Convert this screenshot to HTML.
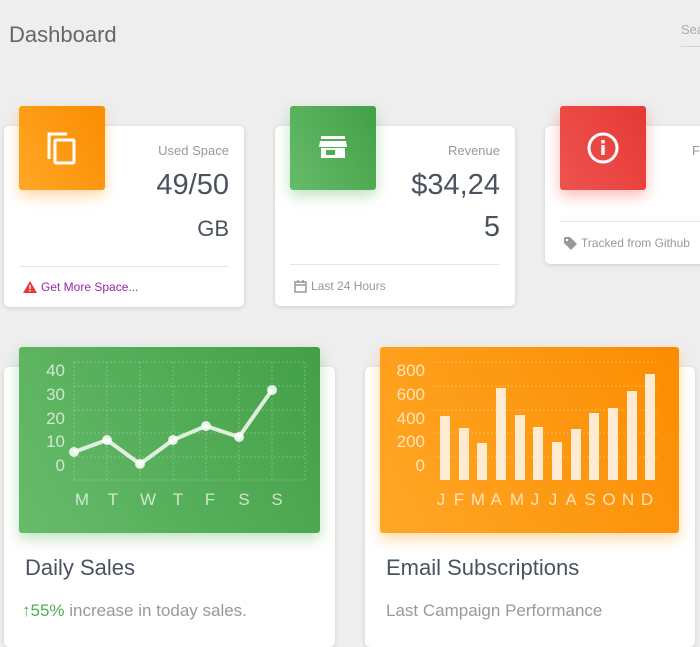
<!DOCTYPE html>
<html><head><meta charset="utf-8"><style>
*{margin:0;padding:0;box-sizing:border-box}
body{width:700px;height:630px;overflow:hidden;background:#eeeeee;font-family:"Liberation Sans",sans-serif;position:relative}
.a{position:absolute}
.card{position:absolute;background:#fff;border-radius:5px;box-shadow:0 1px 4px rgba(0,0,0,.14)}
.ib{position:absolute;width:86px;height:84px;border-radius:3px;display:flex;align-items:center;justify-content:center}
.or{background:linear-gradient(60deg,#ffa726,#fb8c00);box-shadow:0 6px 14px rgba(255,152,0,.35)}
.gr{background:linear-gradient(60deg,#66bb6a,#43a047);box-shadow:0 6px 14px rgba(76,175,80,.35)}
.rd{background:linear-gradient(60deg,#ef5350,#e53935);box-shadow:0 6px 14px rgba(244,67,54,.35)}
.cat{color:#999;font-size:13px;text-align:right}
.val{color:#4a5260;font-size:29px;text-align:right}
.div{position:absolute;height:1px;background:#e6e6e6}
.ft{font-size:12px;color:#999;display:flex;align-items:center;gap:4px}
</style></head><body>
<div class="a" style="left:9px;top:22px;font-size:22px;color:#666">Dashboard</div>
<div class="a" style="left:681px;top:22px;font-size:13px;color:#aaa">Search</div>
<div class="a" style="left:681px;top:46px;width:30px;height:1px;background:#d2d2d2"></div>

<div class="card" style="left:4px;top:126px;width:240px;height:181px"></div>
<div class="ib or" style="left:19px;top:106px"><svg width="32" height="34" viewBox="0 0 32 34" fill="none" stroke="#fff" stroke-width="3"><path d="M3 28V3h18"/><rect x="9" y="9" width="19" height="23" rx="1"/></svg></div>
<div class="a cat" style="left:100px;top:143px;width:129px">Used Space</div>
<div class="a val" style="left:100px;top:169px;width:129px">49/50</div>
<div class="a val" style="left:100px;top:216px;width:129px;font-size:22px">GB</div>
<div class="div" style="left:19px;top:266px;width:210px"></div>
<div class="a ft" style="left:23px;top:280px;color:#9c27b0"><svg width="14" height="12" viewBox="0 0 14 12"><path d="M7 0L14 12H0z" fill="#e53935"/><rect x="6.3" y="4" width="1.4" height="4" fill="#fff"/><rect x="6.3" y="9" width="1.4" height="1.4" fill="#fff"/></svg>Get More Space...</div>

<div class="card" style="left:275px;top:126px;width:240px;height:180px"></div>
<div class="ib gr" style="left:290px;top:106px"><svg width="28" height="24" viewBox="0 0 28 24" fill="#fff"><rect x="2" y="0" width="24" height="3"/><path d="M1 5h26l1 6H0z"/><rect x="2" y="12" width="24" height="10"/><rect x="7" y="14" width="9" height="5" fill="#4caf50"/></svg></div>
<div class="a cat" style="left:370px;top:143px;width:130px">Revenue</div>
<div class="a val" style="left:370px;top:169px;width:130px">$34,24</div>
<div class="a val" style="left:370px;top:211px;width:130px">5</div>
<div class="div" style="left:290px;top:264px;width:210px"></div>
<div class="a ft" style="left:294px;top:279px"><svg width="13" height="13" viewBox="0 0 13 13" fill="none" stroke="#999" stroke-width="1.5"><rect x="1" y="2" width="11" height="10"/><path d="M1 5h11M4 0v3M9 0v3"/></svg>Last 24 Hours</div>

<div class="card" style="left:545px;top:126px;width:170px;height:138px"></div>
<div class="ib rd" style="left:560px;top:106px"><svg width="32" height="32" viewBox="0 0 32 32"><circle cx="16" cy="16" r="14" fill="none" stroke="#fff" stroke-width="3"/><rect x="14.3" y="13" width="3.4" height="10" fill="#fff"/><rect x="14.3" y="8" width="3.4" height="3.4" fill="#fff"/></svg></div>
<div class="a cat" style="left:692px;top:143px;text-align:left">F</div>
<div class="div" style="left:560px;top:221px;width:140px"></div>
<div class="a ft" style="left:564px;top:236px"><svg width="13" height="13" viewBox="0 0 13 13"><path d="M0 1V6l7 7 6-6-7-7H1z" fill="#999"/><circle cx="3" cy="3" r="1.2" fill="#fff"/></svg>Tracked from Github</div>

<div class="card" style="left:4px;top:367px;width:331px;height:280px"></div>
<div class="a gr" style="left:19px;top:347px;width:301px;height:186px;border-radius:3px"></div>
<svg class="a" style="left:0;top:340px" width="340" height="180" viewBox="0 340 340 180" font-family="Liberation Sans" font-size="17" fill="rgba(255,255,255,.7)">
<g stroke="rgba(255,255,255,.25)" stroke-dasharray="2 2" stroke-width="1">
<path d="M74 362H305M74 386H305M74 410H305M74 433H305M74 457H305M74 480H305M74 362V480M107 362V480M140 362V480M173 362V480M206 362V480M239 362V480M272 362V480M305 362V480"/></g>
<g text-anchor="end"><text x="65" y="376">40</text><text x="65" y="400">30</text><text x="65" y="424">20</text><text x="65" y="447">10</text><text x="65" y="471">0</text></g>
<g text-anchor="middle"><text x="82" y="505">M</text><text x="113" y="505">T</text><text x="148" y="505">W</text><text x="178" y="505">T</text><text x="210" y="505">F</text><text x="244" y="505">S</text><text x="277" y="505">S</text></g>
<polyline points="74,452 107,440 140,464 173,440 206,426 239,437 272,390" fill="none" stroke="rgba(255,255,255,.8)" stroke-width="4"/>
<g fill="rgba(255,255,255,.85)"><circle cx="74" cy="452" r="5"/><circle cx="107" cy="440" r="5"/><circle cx="140" cy="464" r="5"/><circle cx="173" cy="440" r="5"/><circle cx="206" cy="426" r="5"/><circle cx="239" cy="437" r="5"/><circle cx="272" cy="390" r="5"/></g>
</svg>
<div class="a" style="left:25px;top:555px;font-size:22px;color:#4a5260">Daily Sales</div>
<div class="a" style="left:22px;top:601px;font-size:17px;color:#999"><span style="color:#4caf50">&#8593;55%</span> increase in today sales.</div>

<div class="card" style="left:365px;top:367px;width:330px;height:280px"></div>
<div class="a or" style="left:380px;top:347px;width:299px;height:186px;border-radius:3px"></div>
<svg class="a" style="left:360px;top:340px" width="340" height="180" viewBox="360 340 340 180" font-family="Liberation Sans" font-size="17" fill="rgba(255,255,255,.7)">
<g stroke="rgba(255,255,255,.3)" stroke-dasharray="2 2"><path d="M435 362H658M435 386H658M435 410H658M435 433H658M435 457H658"/></g>
<g text-anchor="end"><text x="425" y="376">800</text><text x="425" y="400">600</text><text x="425" y="424">400</text><text x="425" y="447">200</text><text x="425" y="471">0</text></g>
<g fill="#ffebd2">
<rect x="440" y="416" width="10" height="64"/><rect x="459" y="428" width="10" height="52"/><rect x="477" y="443" width="10" height="37"/><rect x="496" y="388" width="10" height="92"/><rect x="515" y="415" width="10" height="65"/><rect x="533" y="427" width="10" height="53"/><rect x="552" y="442" width="10" height="38"/><rect x="571" y="429" width="10" height="51"/><rect x="589" y="413" width="10" height="67"/><rect x="608" y="408" width="10" height="72"/><rect x="627" y="391" width="10" height="89"/><rect x="645" y="374" width="10" height="106"/></g>
<g text-anchor="middle"><text x="441" y="505">J</text><text x="459" y="505">F</text><text x="478" y="505">M</text><text x="496" y="505">A</text><text x="517" y="505">M</text><text x="535" y="505">J</text><text x="553" y="505">J</text><text x="571" y="505">A</text><text x="590" y="505">S</text><text x="609" y="505">O</text><text x="628" y="505">N</text><text x="647" y="505">D</text></g>
</svg>
<div class="a" style="left:386px;top:555px;font-size:22px;color:#4a5260">Email Subscriptions</div>
<div class="a" style="left:386px;top:601px;font-size:17px;color:#999">Last Campaign Performance</div>
</body></html>
